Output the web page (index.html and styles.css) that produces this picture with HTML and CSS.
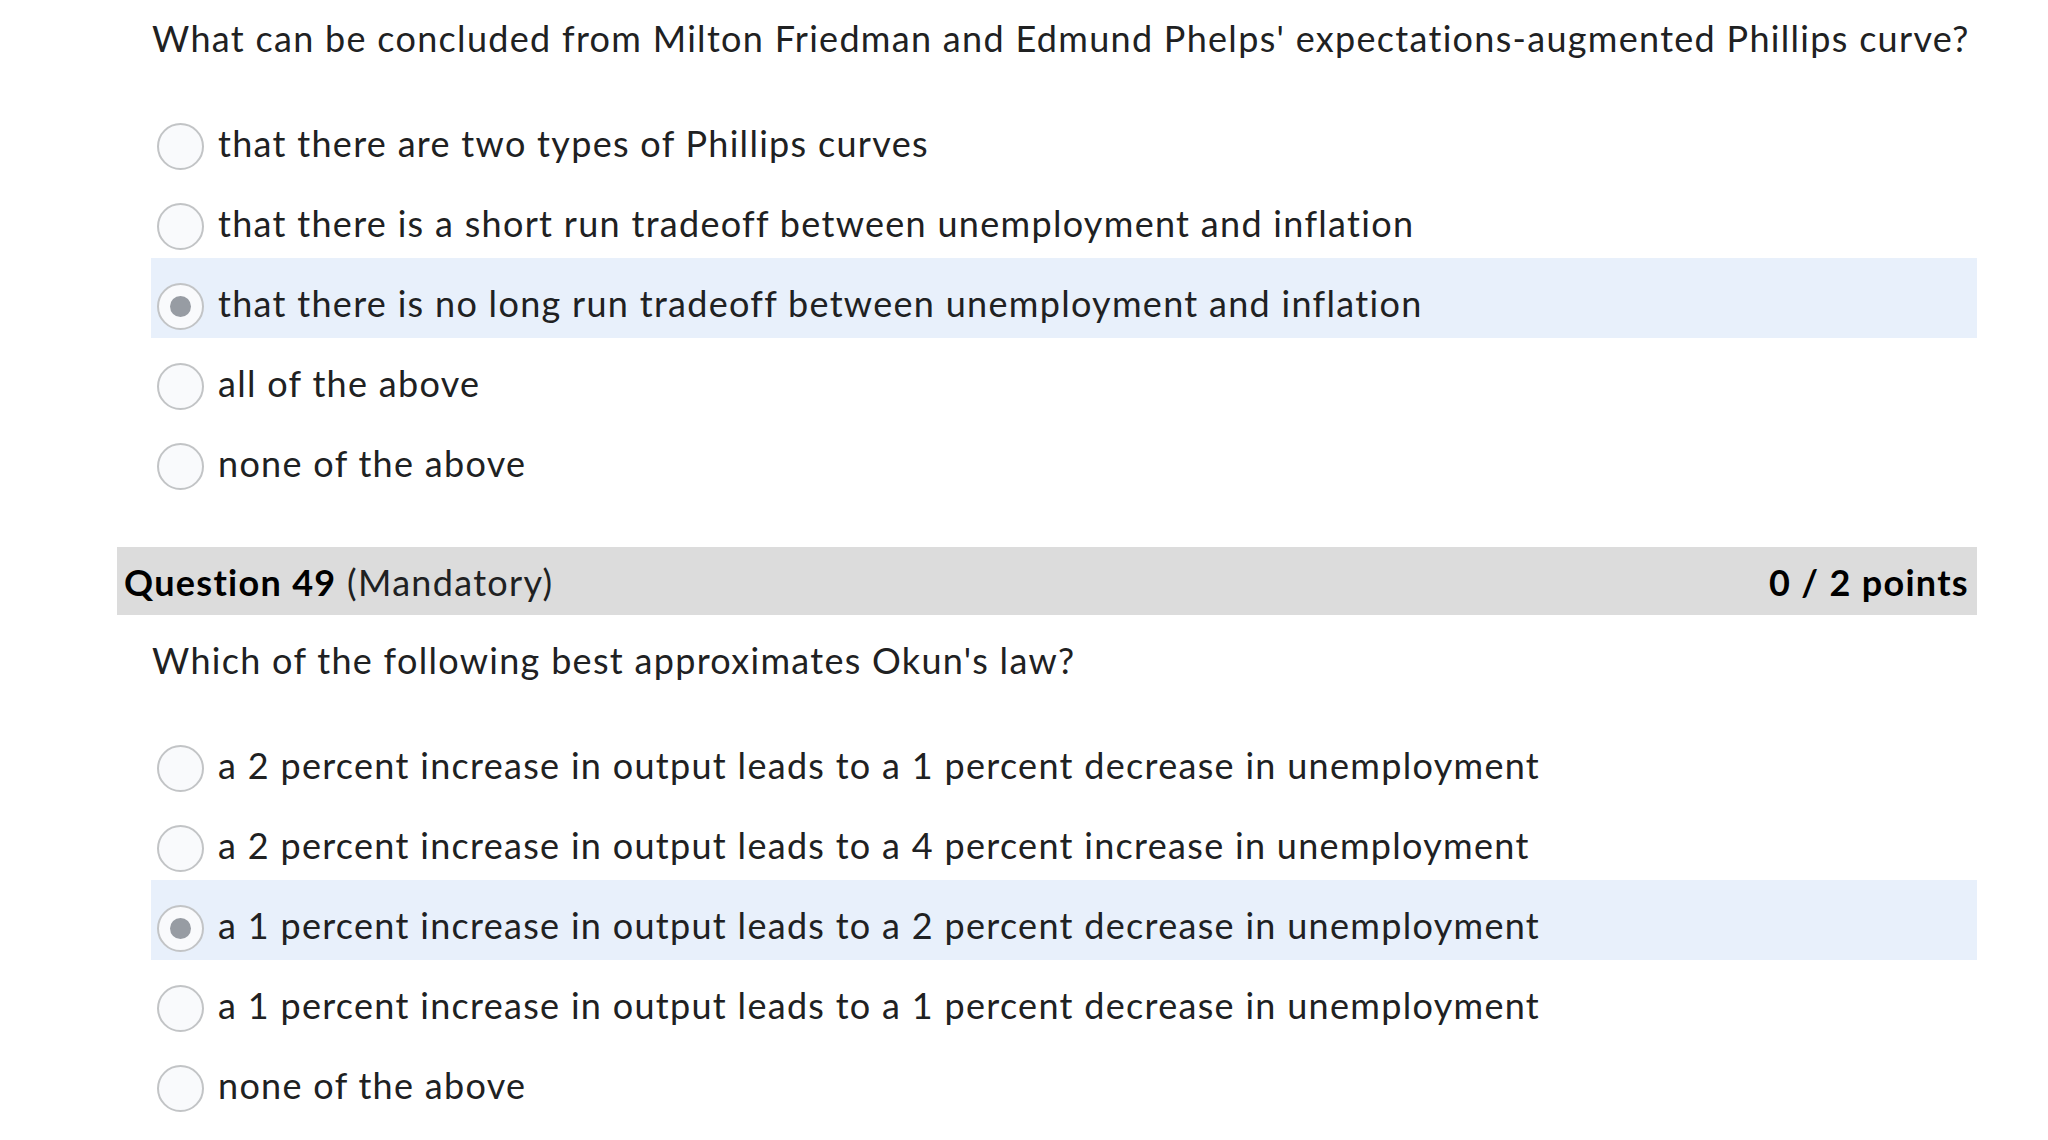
FILE: index.html
```html
<!DOCTYPE html>
<html lang="en">
<head>
  <meta charset="UTF-8">
  <meta name="viewport" content="width=device-width, initial-scale=1.0">
  <title>Quiz review</title>
  <link rel="stylesheet" href="styles.css">
</head>
<body>
  <div class="quiz">
    <p class="prompt prompt-first">What can be concluded from Milton Friedman and Edmund Phelps' expectations-augmented Phillips curve?</p>
    <ul class="choices">
      <li class="choice"><span class="radio"></span><span class="label">that there are two types of Phillips curves</span></li>
      <li class="choice"><span class="radio"></span><span class="label">that there is a short run tradeoff between unemployment and inflation</span></li>
      <li class="choice selected"><span class="radio"></span><span class="label">that there is no long run tradeoff between unemployment and inflation</span></li>
      <li class="choice"><span class="radio"></span><span class="label">all of the above</span></li>
      <li class="choice"><span class="radio"></span><span class="label">none of the above</span></li>
    </ul>

    <div class="q-header">
      <span class="q-title"><strong>Question 49</strong> (Mandatory)</span>
      <span class="q-points">0 / 2 points</span>
    </div>
    <p class="prompt">Which of the following best approximates Okun's law?</p>
    <ul class="choices">
      <li class="choice"><span class="radio"></span><span class="label">a 2 percent increase in output leads to a 1 percent decrease in unemployment</span></li>
      <li class="choice"><span class="radio"></span><span class="label">a 2 percent increase in output leads to a 4 percent increase in unemployment</span></li>
      <li class="choice selected"><span class="radio"></span><span class="label">a 1 percent increase in output leads to a 2 percent decrease in unemployment</span></li>
      <li class="choice"><span class="radio"></span><span class="label">a 1 percent increase in output leads to a 1 percent decrease in unemployment</span></li>
      <li class="choice"><span class="radio"></span><span class="label">none of the above</span></li>
    </ul>
  </div>
</body>
</html>
```

FILE: styles.css
```css
body {
  margin: 0;
  background: #fff;
  color: #202122;
  font-family: Lato, "Open Sans", sans-serif;
  font-size: 36px;
  line-height: 44px;
  letter-spacing: 1.3px;
  font-variant-ligatures: none;
}
.quiz {
  margin-left: 117px;
  width: 1860px;
}
.prompt {
  margin: 23px 0 38px;
  padding-left: 35px;
}
.prompt-first {
  margin-top: 16px;
}
.choices {
  list-style: none;
  margin: 0 0 0 34px;
  padding: 0;
}
.choice {
  display: flex;
  align-items: flex-start;
  height: 80px;
  padding-left: 6px;
  box-sizing: border-box;
}
.choice.selected {
  background-color: #e8f0fb;
}
.radio {
  position: relative;
  flex: none;
  width: 47px;
  height: 47px;
  margin-top: 25px;
  border: 2px solid #c2c4c6;
  border-radius: 50%;
  background: #f9fafc;
  box-sizing: border-box;
}
.selected .radio::after {
  content: "";
  position: absolute;
  left: 11px;
  top: 11px;
  width: 21px;
  height: 21px;
  border-radius: 50%;
  background: #979ca3;
}
.label {
  margin-top: 23px;
  margin-left: 14px;
  white-space: nowrap;
}
.q-header {
  display: flex;
  justify-content: space-between;
  margin-top: 49px;
  height: 68px;
  padding: 13px 8px 0 7px;
  box-sizing: border-box;
  background-color: #dcdcdc;
  color: #000;
}
.q-title strong,
.q-points {
  font-weight: 700;
}
.q-title {
  color: #202122;
}
.q-title strong {
  color: #000;
}
```
